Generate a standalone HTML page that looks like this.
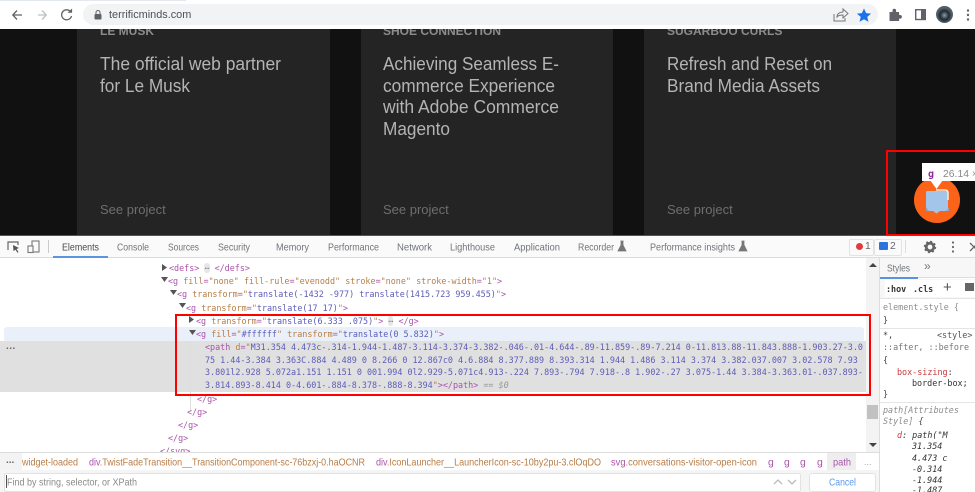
<!DOCTYPE html>
<html><head><meta charset="utf-8"><style>
html,body{margin:0;padding:0;background:#fff}
#p{position:relative;width:975px;height:492px;overflow:hidden;background:#fff;font-family:"Liberation Sans",sans-serif;filter:blur(.3px)}
#p div,#p svg{position:absolute}
.sp{font-size:13px;color:#6e6e6e;white-space:nowrap;line-height:16px}
.lb{font-size:12px;font-weight:bold;color:#8c8c8c;white-space:nowrap;line-height:12px}
.tb{font-size:10.3px;color:#62666b;white-space:nowrap;line-height:14px}
.m{font-family:"DejaVu Sans Mono","Liberation Mono",monospace;font-size:8.42px;line-height:13px;white-space:pre;color:#5c5cb8}
.g{color:#ab52aa}.o{color:#b97c45}.v{color:#5c5cb8}
.pl{background:#e6e6e6;border-radius:4px;color:#888}
.s{font-family:"DejaVu Sans Mono","Liberation Mono",monospace;font-size:8.42px;line-height:12px;white-space:pre;color:#444}
#o text{font-family:"Liberation Sans",sans-serif}
#o .h{font-size:18px;fill:#b4b4b4}
#o .t{font-size:10.4px;fill:#70747a}
#o .b{font-size:10.4px;fill:#b97c45}
#o .b tspan{fill:#ab52aa}
</style></head><body><div id="p">

<!-- browser chrome -->
<div style="left:0;top:0;width:975px;height:29px;background:#fff"></div>
<div style="left:0;top:0;width:186px;height:1px;background:#e3e8ee"></div>
<div style="left:83px;top:4px;width:795px;height:21px;border-radius:11px;background:#f1f3f4"></div>
<svg style="left:10px;top:6px" width="70" height="18" viewBox="0 0 70 18" fill="none"><path d="M12 9H3M7 4.500 2.800 9 7 13.500" stroke="#5f6368" stroke-width="1.300"/><path d="M28 9h8M32 4.500 36.200 9 32 13.500" stroke="#bcbfc3" stroke-width="1.300"/><path d="M60.500 5.600A5 5 0 1 0 61.500 10" stroke="#5f6368" stroke-width="1.300"/><path d="M57.500 6.800h4.600V2.500z" fill="#5f6368"/></svg>
<svg style="left:93px;top:9px" width="11" height="12" viewBox="0 0 11 12"><rect x="1.500" y="5" width="7" height="5.500" rx="1" fill="#5f6368"/><path d="M3 5V3.500a2 2 0 0 1 4 0V5" stroke="#5f6368" fill="none"/></svg>
<div style="left:109px;top:8px;font-size:10.9px;color:#4d5156;line-height:15px;white-space:nowrap">terrificminds.com</div>
<svg style="left:832px;top:6px" width="50" height="18" viewBox="0 0 50 18"><path d="M2 8v7h11v-3" fill="none" stroke="#777" stroke-width="1"/><path d="M5 11c0-3.500 3-5 6-5V3l5 4.500-5 4.500V9c-3 0-5 .5-6 2z" fill="none" stroke="#777" stroke-width="1"/><path d="M32 2.500l2.100 4.600 5 .5-3.800 3.300 1.100 4.900-4.400-2.600-4.400 2.600 1.100-4.900-3.800-3.300 5-.5z" fill="#1a73e8"/></svg>
<svg style="left:888px;top:6px" width="40" height="18" viewBox="0 0 40 18"><path d="M1.500 6h3V4.500a1.800 1.800 0 0 1 3.600 0V6h3v3h1a1.800 1.800 0 0 1 0 3.600h-1V15h-9.600z" fill="#5f6368"/><rect x="27.700" y="3.700" width="9.600" height="9.800" fill="none" stroke="#5f6368" stroke-width="1.400"/><rect x="33" y="3.700" width="4.300" height="9.800" fill="#5f6368"/></svg>
<div style="left:936px;top:6px;width:17px;height:17px;border-radius:50%;background:radial-gradient(circle at 50% 55%,#8e9aa3 0,#1e2a33 35%,#56626c 60%,#2f3a45 100%)"></div>
<svg style="left:965px;top:8px" width="6" height="14" viewBox="0 0 6 14"><circle cx="3" cy="2.500" r="1.200" fill="#5f6368"/><circle cx="3" cy="7" r="1.200" fill="#5f6368"/><circle cx="3" cy="11.500" r="1.200" fill="#5f6368"/></svg>

<!-- page -->
<div style="left:0;top:29px;width:975px;height:207px;background:#111;overflow:hidden">
  <div style="left:77px;top:0;width:253px;height:207px;background:#242424"></div>
  <div style="left:361px;top:0;width:252px;height:207px;background:#242424"></div>
  <div style="left:644px;top:0;width:252px;height:207px;background:#242424"></div>
  <div class="lb" style="left:100px;top:-4px">LE MUSK</div>
  <div class="lb" style="left:383px;top:-4px">SHOE CONNECTION</div>
  <div class="lb" style="left:667px;top:-4px">SUGARBOO CURLS</div>
  <div class="sp" style="left:100px;top:173px">See project</div>
  <div class="sp" style="left:383px;top:173px">See project</div>
  <div class="sp" style="left:667px;top:173px">See project</div>
</div>

<!-- launcher highlight -->
<div style="left:914px;top:177px;width:46px;height:46px;border-radius:50%;background:#fb6418"></div>
<div style="left:926px;top:191px;width:22px;height:20px;background:#a3c5e9;border-radius:1px"></div>
<svg style="left:925px;top:186px" width="28" height="30" viewBox="0 0 28 30"><path d="M11 4h9c2 0 3 1 3 3v7" fill="none" stroke="#fde9dd" stroke-width="1.500"/><path d="M8 25h7l-3.500 2.500z" fill="#a3c5e9"/><path d="M1 21v4h3zM24 21v4h-3z" fill="#9aa3bc"/></svg>
<div style="left:922px;top:163px;width:53px;height:18px;background:#fff"></div>
<svg style="left:929px;top:180px" width="16" height="11" viewBox="0 0 16 11"><path d="M1 0h13L7.500 9z" fill="#fff"/></svg>
<div style="left:928px;top:168px;font-family:'DejaVu Sans Mono',monospace;font-weight:bold;font-size:10px;line-height:14px;color:#8a2a92">g</div>
<div style="left:943px;top:168px;font-size:10.4px;line-height:14px;color:#888;white-space:nowrap">26.14 ×</div>
<div style="left:886px;top:150px;width:87px;height:82px;border:2px solid #f00;border-right:3px solid #f00"></div>

<!-- devtools -->
<div style="left:0;top:235px;width:975px;height:1px;background:#555"></div>
<div style="left:0;top:236px;width:975px;height:21px;background:#fafafa"></div>
<div style="left:0;top:257px;width:975px;height:1px;background:#dcdcdc"></div>
<svg style="left:6px;top:240px" width="36" height="14" viewBox="0 0 36 14" fill="none"><path d="M2 10V2h10v3" stroke="#666" stroke-width="1.200"/><path d="M7 5l6 3-2.500 1 2 3-1 .8-2-3L7.500 11z" fill="#555"/><rect x="26" y="1" width="7" height="11" stroke="#777" stroke-width="1.100"/><rect x="22" y="6" width="5" height="6.500" stroke="#777" fill="#fafafa" stroke-width="1.100"/></svg>
<div style="left:48px;top:240px;width:1px;height:13px;background:#ccc"></div>
<div style="left:53px;top:256px;width:55px;height:2px;background:#5b93e0"></div>
<svg style="left:616px;top:240px" width="12" height="13" viewBox="0 0 12 13"><path d="M4.500 1h3M5 1v4L2 11h8L7 5V1z" fill="#777" stroke="#777" stroke-width=".8"/></svg>
<svg style="left:737px;top:240px" width="12" height="13" viewBox="0 0 12 13"><path d="M4.500 1h3M5 1v4L2 11h8L7 5V1z" fill="#777" stroke="#777" stroke-width=".8"/></svg>

<div style="left:849px;top:239px;width:23px;height:15px;border:1px solid #e3e3e3;border-radius:2px"></div>
<div style="left:856px;top:243px;width:7px;height:7px;border-radius:50%;background:#e33b3b"></div>
<div class="tb" style="left:865px;top:240px">1</div>
<div style="left:874px;top:239px;width:26px;height:15px;border:1px solid #e3e3e3;border-radius:2px"></div>
<div style="left:879px;top:242px;width:9px;height:8px;background:#2b74e0;border-radius:1px"></div>
<div class="tb" style="left:890px;top:240px">2</div>
<div style="left:905px;top:240px;width:1px;height:13px;background:#ddd"></div>
<svg style="left:923px;top:240px" width="14" height="14" viewBox="0 0 14 14"><circle cx="7" cy="7" r="3.800" fill="none" stroke="#666" stroke-width="2.800"/><circle cx="7" cy="7" r="5.400" fill="none" stroke="#666" stroke-width="1.600" stroke-dasharray="2 2.240"/></svg>
<svg style="left:950px;top:240px" width="6" height="14" viewBox="0 0 6 14"><circle cx="3" cy="2.500" r="1.100" fill="#666"/><circle cx="3" cy="7" r="1.100" fill="#666"/><circle cx="3" cy="11.500" r="1.100" fill="#666"/></svg>
<svg style="left:969px;top:242px" width="6" height="10" viewBox="0 0 6 10"><path d="M1 1l8 8M9 1L1 9" stroke="#666" stroke-width="1.300" fill="none"/></svg>

<!-- DOM tree -->
<div style="left:4px;top:327px;width:860px;height:15px;background:#e9f0fa;border-radius:3px"></div>
<div style="left:0;top:341px;width:866px;height:51px;background:#e0e0e0"></div>
<div style="left:190px;top:341px;width:1px;height:70px;background:#dedede"></div>
<div style="left:6px;top:342px;font-size:10px;line-height:10px;color:#666;letter-spacing:.5px;font-weight:bold">...</div>

<div class="m" style="left:169px;top:262px"><span class="g">&lt;defs&gt;</span> <span class="pl">⋯</span> <span class="g">&lt;/defs&gt;</span></div>
<div class="m" style="left:168px;top:275px"><span class="g">&lt;g</span> <span class="o">fill</span><span class="g">=</span><span class="o">"none"</span> <span class="o">fill-rule</span><span class="g">=</span><span class="o">"evenodd"</span> <span class="o">stroke</span><span class="g">=</span><span class="o">"none"</span> <span class="o">stroke-width</span><span class="g">=</span><span class="o">"1"</span><span class="g">&gt;</span></div>
<div class="m" style="left:177px;top:288px"><span class="g">&lt;g</span> <span class="o">transform</span><span class="g">=</span><span class="o">"</span><span class="v">translate(-1432 -977) translate(1415.723 959.455)</span><span class="o">"</span><span class="g">&gt;</span></div>
<div class="m" style="left:186px;top:302px"><span class="g">&lt;g</span> <span class="o">transform</span><span class="g">=</span><span class="o">"</span><span class="v">translate(17 17)</span><span class="o">"</span><span class="g">&gt;</span></div>
<div class="m" style="left:196px;top:315px"><span class="g">&lt;g</span> <span class="o">transform</span><span class="g">=</span><span class="o">"</span><span class="v">translate(6.333 .075)</span><span class="o">"</span><span class="g">&gt;</span> <span class="pl">⋯</span> <span class="g">&lt;/g&gt;</span></div>
<div class="m" style="left:196px;top:328px"><span class="g">&lt;g</span> <span class="o">fill</span><span class="g">=</span><span class="o">"</span><span class="v">#ffffff</span><span class="o">"</span> <span class="o">transform</span><span class="g">=</span><span class="o">"</span><span class="v">translate(0 5.832)</span><span class="o">"</span><span class="g">&gt;</span></div>
<div style="left:205px;top:341px;width:661px;height:56px;overflow:hidden">
<div class="m" style="left:0;top:0"><span class="g">&lt;path</span> <span class="o">d</span><span class="g">=</span><span class="o">"</span>M31.354 4.473c-.314-1.944-1.487-3.114-3.374-3.382-.046-.01-4.644-.89-11.859-.89-7.214 0-11.813.88-11.843.888-1.903.27-3.0</div>
<div class="m" style="left:0;top:13px">75 1.44-3.384 3.363C.884 4.489 0 8.266 0 12.867c0 4.6.884 8.377.889 8.393.314 1.944 1.486 3.114 3.374 3.382.037.007 3.02.578 7.93</div>
<div class="m" style="left:0;top:25px">3.801l2.928 5.072a1.151 1.151 0 001.994 0l2.929-5.071c4.913-.224 7.893-.794 7.918-.8 1.902-.27 3.075-1.44 3.384-3.363.01-.037.893-</div>
<div class="m" style="left:0;top:38px">3.814.893-8.414 0-4.601-.884-8.378-.888-8.394<span class="o">"</span><span class="g">&gt;&lt;/path&gt;</span><span style="color:#999;font-style:italic"> == $0</span></div>
</div>
<div class="m" style="left:197px;top:393px;color:#ab52aa">&lt;/g&gt;</div>
<div class="m" style="left:187px;top:406px;color:#ab52aa">&lt;/g&gt;</div>
<div class="m" style="left:178px;top:419px;color:#ab52aa">&lt;/g&gt;</div>
<div class="m" style="left:168px;top:432px;color:#ab52aa">&lt;/g&gt;</div>
<div class="m" style="left:160px;top:445px;color:#ab52aa">&lt;/svg&gt;</div>

<svg style="left:160px;top:262px" width="40" height="80" viewBox="0 0 40 80"><g fill="#555"><path d="M2 2l5 3.500-5 3.500z"/><path d="M1 15h7l-3.500 5z"/><path d="M10 28h7l-3.500 5z"/><path d="M19 41h7l-3.500 5z"/><path d="M29 54l5 3.500-5 3.500z"/><path d="M29 68h7l-3.500 5z"/></g></svg>

<!-- scrollbar -->
<div style="left:866px;top:258px;width:14px;height:194px;background:#f3f3f3"></div>
<div style="left:867px;top:405px;width:11px;height:14px;background:#c1c1c1"></div>
<svg style="left:869px;top:262px" width="8" height="5" viewBox="0 0 8 5"><path d="M0 5l4-4 4 4z" fill="#444"/></svg>
<svg style="left:869px;top:443px" width="8" height="5" viewBox="0 0 8 5"><path d="M0 0l4 4 4-4z" fill="#444"/></svg>

<!-- red box -->
<div style="left:175px;top:314px;width:692px;height:78px;border:solid #f00;border-width:2.500px"></div>

<!-- styles panel -->
<div style="left:879px;top:258px;width:96px;height:234px;background:#fff;border-left:1px solid #ddd"></div>
<div style="left:880px;top:258px;width:95px;height:20px;background:#f7f7f7"></div>
<div style="left:880px;top:277px;width:95px;height:1px;background:#ddd"></div>
<div style="left:880px;top:277px;width:38px;height:2px;background:#5b93e0"></div>
<div style="left:924px;top:259px;font-size:12px;line-height:14px;color:#777">»</div>
<div style="left:880px;top:279px;width:95px;height:19px;background:#f7f7f7"></div>
<div style="left:885px;top:280px;width:90px;height:17px;background:#fff"></div>
<div class="s" style="left:886px;top:283px;color:#333;font-weight:bold;font-size:8.4px">:hov</div>
<div class="s" style="left:913px;top:283px;color:#333;font-weight:bold;font-size:8.4px">.cls</div>
<div style="left:943px;top:280px;font-size:15px;line-height:15px;color:#555">+</div>
<div style="left:965px;top:283px;width:9px;height:8px;background:#666"></div>
<div style="left:880px;top:298px;width:95px;height:1px;background:#e5e5e5"></div>
<div class="s" style="left:883px;top:301px;color:#8c8c8c">element.style {</div>
<div class="s" style="left:883px;top:314px">}</div>
<div style="left:880px;top:328px;width:95px;height:1px;background:#e5e5e5"></div>
<div class="s" style="left:883px;top:329px">*,</div>
<div class="s" style="left:937px;top:329px;color:#555">&lt;style&gt;</div>
<div class="s" style="left:883px;top:341px;color:#777">::after, ::before</div>
<div class="s" style="left:883px;top:354px">{</div>
<div class="s" style="left:897px;top:366px;color:#c93a3a">box-sizing<span style="color:#333">:</span></div>
<div class="s" style="left:912px;top:377px;color:#333">border-box;</div>
<div class="s" style="left:883px;top:388px">}</div>
<div style="left:880px;top:402px;width:95px;height:1px;background:#e5e5e5"></div>
<div class="s" style="left:883px;top:404px;color:#8c8c8c;font-style:italic">path[Attributes</div>
<div class="s" style="left:883px;top:415px;color:#8c8c8c;font-style:italic">Style] <span style="color:#444">{</span></div>
<div class="s" style="left:897px;top:429px;color:#c93a3a;font-style:italic">d<span style="color:#333">: path("M</span></div>
<div class="s" style="left:912px;top:440px;color:#333;font-style:italic">31.354</div>
<div class="s" style="left:912px;top:452px;color:#333;font-style:italic">4.473 c</div>
<div class="s" style="left:912px;top:463px;color:#333;font-style:italic">-0.314</div>
<div class="s" style="left:912px;top:474px;color:#333;font-style:italic">-1.944</div>
<div class="s" style="left:912px;top:484px;color:#333;font-style:italic">-1.487</div>

<!-- breadcrumb -->
<div style="left:0;top:452px;width:879px;height:1px;background:#ddd"></div>
<div style="left:0;top:453px;width:879px;height:17px;background:#fff"></div>
<div style="left:0;top:453px;width:22px;height:17px;background:#f3f3f3"></div>
<div style="left:6px;top:455px;font-size:10px;line-height:12px;color:#666;font-weight:bold">...</div>
<div style="left:827px;top:453px;width:29px;height:17px;background:#eeeeee"></div>
<div style="left:864px;top:457px;font-size:9px;line-height:10px;color:#aaa">...</div>

<!-- find bar -->
<div style="left:0;top:470px;width:879px;height:22px;background:#f5f5f5"></div>
<div style="left:4px;top:473px;width:795px;height:17px;background:#fff;border:1px solid #e2e2e2;border-radius:2px"></div>
<div style="left:809px;top:473px;width:65px;height:17px;background:#fff;border:1px solid #e2e2e2;border-radius:3px"></div>
<div style="left:6px;top:475px;width:1px;height:13px;background:#555"></div>
<svg style="left:773px;top:478px" width="24" height="7" viewBox="0 0 24 7" fill="none"><path d="M1 6l4-4 4 4" stroke="#bbb" stroke-width="1.300"/><path d="M15 2l4 4 4-4" stroke="#bbb" stroke-width="1.300"/></svg>

<!-- fitted text layer -->
<svg id="o" style="left:0;top:0" width="975" height="492" viewBox="0 0 975 492">
<g class="hh">
<text class="h" x="100" y="70" textLength="181" lengthAdjust="spacingAndGlyphs">The official web partner</text>
<text class="h" x="100" y="92" textLength="90" lengthAdjust="spacingAndGlyphs">for Le Musk</text>
<text class="h" x="383" y="70" textLength="176" lengthAdjust="spacingAndGlyphs">Achieving Seamless E-</text>
<text class="h" x="383" y="92" textLength="172" lengthAdjust="spacingAndGlyphs">commerce Experience</text>
<text class="h" x="383" y="113" textLength="176" lengthAdjust="spacingAndGlyphs">with Adobe Commerce</text>
<text class="h" x="383" y="135" textLength="67" lengthAdjust="spacingAndGlyphs">Magento</text>
<text class="h" x="667" y="70" textLength="165" lengthAdjust="spacingAndGlyphs">Refresh and Reset on</text>
<text class="h" x="667" y="92" textLength="153" lengthAdjust="spacingAndGlyphs">Brand Media Assets</text>
</g>
<text class="t" style="fill:#4a4a4a" x="62" y="250.500" textLength="37" lengthAdjust="spacingAndGlyphs">Elements</text>
<text class="t" x="117" y="250.500" textLength="32" lengthAdjust="spacingAndGlyphs">Console</text>
<text class="t" x="168" y="250.500" textLength="31" lengthAdjust="spacingAndGlyphs">Sources</text>
<text class="t" x="218" y="250.500" textLength="32" lengthAdjust="spacingAndGlyphs">Security</text>
<text class="t" x="276" y="250.500" textLength="33" lengthAdjust="spacingAndGlyphs">Memory</text>
<text class="t" x="328" y="250.500" textLength="51" lengthAdjust="spacingAndGlyphs">Performance</text>
<text class="t" x="397" y="250.500" textLength="35" lengthAdjust="spacingAndGlyphs">Network</text>
<text class="t" x="450" y="250.500" textLength="45" lengthAdjust="spacingAndGlyphs">Lighthouse</text>
<text class="t" x="514" y="250.500" textLength="46" lengthAdjust="spacingAndGlyphs">Application</text>
<text class="t" x="578" y="250.500" textLength="36" lengthAdjust="spacingAndGlyphs">Recorder</text>
<text class="t" x="650" y="250.500" textLength="85" lengthAdjust="spacingAndGlyphs">Performance insights</text>
<text class="t" x="887" y="271.500" textLength="23" lengthAdjust="spacingAndGlyphs">Styles</text>
<text class="b" x="22" y="465.500" textLength="56" lengthAdjust="spacingAndGlyphs">widget-loaded</text>
<text class="b" x="89" y="465.500" textLength="276" lengthAdjust="spacingAndGlyphs"><tspan>div</tspan>.TwistFadeTransition__TransitionComponent-sc-76bzxj-0.haOCNR</text>
<text class="b" x="376" y="465.500" textLength="225" lengthAdjust="spacingAndGlyphs"><tspan>div</tspan>.IconLauncher__LauncherIcon-sc-10by2pu-3.clOqDO</text>
<text class="b" x="611" y="465.500" textLength="146" lengthAdjust="spacingAndGlyphs"><tspan>svg</tspan>.conversations-visitor-open-icon</text>
<text class="b" x="768" y="465.500"><tspan>g</tspan></text>
<text class="b" x="784" y="465.500"><tspan>g</tspan></text>
<text class="b" x="800" y="465.500"><tspan>g</tspan></text>
<text class="b" x="817" y="465.500"><tspan>g</tspan></text>
<text class="b" x="833" y="465.500" textLength="18" lengthAdjust="spacingAndGlyphs"><tspan>path</tspan></text>
<text class="t" style="fill:#8a8a8a" x="7" y="485.500" textLength="130" lengthAdjust="spacingAndGlyphs">Find by string, selector, or XPath</text>
<text class="t" style="fill:#5a96ee" x="829" y="485.500" textLength="27" lengthAdjust="spacingAndGlyphs">Cancel</text>
</svg>

</div></body></html>
